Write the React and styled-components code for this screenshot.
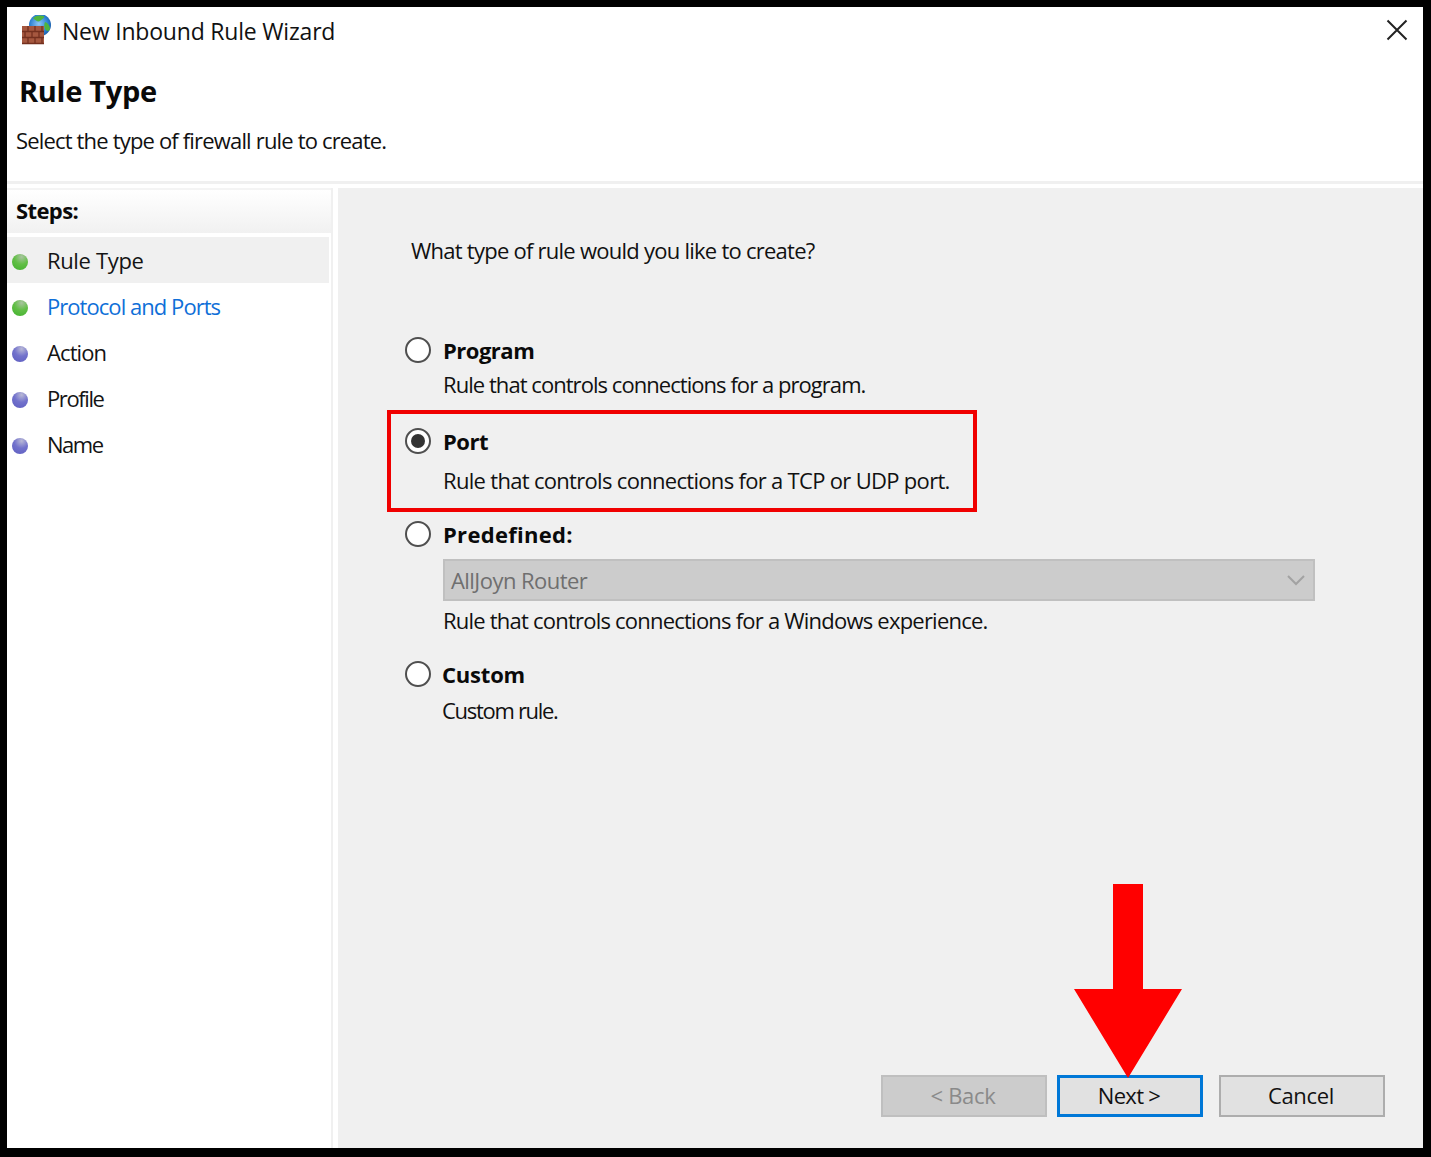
import React from "react";
import styled, { createGlobalStyle } from "styled-components";

const Global = createGlobalStyle`
  html, body { margin: 0; padding: 0; background: #000; }
  body { font-family: "Open Sans", "Noto Sans", "Liberation Sans", sans-serif; color: #111; }
  * { box-sizing: border-box; }
`;

const Frame = styled.div`
  position: relative;
  width: 1431px;
  height: 1157px;
  background: #000;
  padding: 7px 8px 9px 7px;
`;
const Dialog = styled.div`
  width: 100%;
  height: 100%;
  background: #fff;
  display: flex;
  flex-direction: column;
`;
const Header = styled.header`
  height: 177px;
  flex: none;
  border-bottom: 3px solid #f0f0f0;
  padding: 9px 15px 0 9px;
  display: flex;
  flex-direction: column;
`;
const TitleBar = styled.div`
  display: flex;
  align-items: center;
  height: 30px;
  padding-left: 4px;
`;
const AppIcon = styled.svg`
  width: 32px;
  height: 32px;
  flex: none;
  margin-right: 10px;
`;
const WindowTitle = styled.div`
  font-size: 23px;
  line-height: 30px;
  letter-spacing: -0.2px;
  flex: 1;
`;
const CloseIcon = styled.svg`
  width: 22px;
  height: 22px;
  flex: none;
  margin-bottom: 2px;
  color: #222;
`;
const Heading = styled.h1`
  margin: 27px 0 0 3px;
  font-size: 29px;
  line-height: 36px;
  font-weight: 700;
  letter-spacing: -0.3px;
  color: #0a0a0a;
`;
const Subheading = styled.p`
  margin: 16px 0 0 0;
  font-size: 22px;
  line-height: 30px;
  letter-spacing: -0.83px;
`;
const Body = styled.div`
  flex: 1;
  display: flex;
  min-height: 0;
  padding-top: 4px;
`;
const Sidebar = styled.aside`
  width: 326px;
  flex: none;
  border-right: 2px solid #f0f0f0;
  display: flex;
  flex-direction: column;
`;
const StepsTitle = styled.div`
  height: 45px;
  border-top: 2px solid #f4f4f4;
  background: linear-gradient(#ffffff, #f1f1f1);
  padding-left: 9px;
  font-size: 22px;
  line-height: 40px;
  font-weight: 700;
  letter-spacing: -0.6px;
  color: #0a0a0a;
`;
const StepList = styled.div`
  margin-top: 4px;
  display: flex;
  flex-direction: column;
  padding-right: 2px;
`;
const Step = styled.div`
  height: 46px;
  display: flex;
  align-items: center;
  padding-left: 5px;
  background: ${(p) => (p.$current ? "#f0f0f0" : "transparent")};
  color: ${(p) => (p.$link ? "#0f6fd8" : "#141414")};
  font-size: 22px;
  letter-spacing: ${(p) => p.$spacing}px;
`;
const Bullet = styled.span`
  width: 16px;
  height: 16px;
  border-radius: 50%;
  margin: 4px 19px 0 0;
  flex: none;
  background: ${(p) =>
    p.$done
      ? "radial-gradient(circle at 60% 18%, #a9c4a0 0, #62bf46 45%, #3fb02c 100%)"
      : "radial-gradient(circle at 60% 18%, #b9b9d6 0, #7272cc 45%, #5c5cc0 100%)"};
`;
const Panel = styled.main`
  flex: 1;
  margin-left: 5px;
  background: #f0f0f0;
  padding: 47px 38px 31px 49px;
  display: flex;
  flex-direction: column;
`;
const Question = styled.div`
  margin-left: 24px;
  font-size: 22px;
  line-height: 30px;
  letter-spacing: -0.75px;
  margin-bottom: 70px;
`;
const Option = styled.div`
  width: ${(p) => (p.$wide ? 928 : 590)}px;
  border-style: solid;
  border-color: ${(p) => (p.$marked ? "#f00000" : "transparent")};
  border-width: ${(p) => (p.$marked ? "4px" : "0 4px")};
  padding: ${(p) => (p.$marked ? "12px 14px 13px" : "0 14px")};
  margin-bottom: ${(p) => p.$after || 0}px;
`;
const OptionRow = styled.label`
  display: flex;
  align-items: center;
  height: 30px;
`;
const Radio = styled.span`
  width: 26px;
  height: 26px;
  border-radius: 50%;
  border: 2px solid #4f4f4f;
  background: #fff;
  margin-right: ${(p) => p.$gap || 12}px;
  flex: none;
  display: flex;
  align-items: center;
  justify-content: center;
  &::after {
    content: "";
    width: 14px;
    height: 14px;
    border-radius: 50%;
    background: ${(p) => (p.$checked ? "#333" : "transparent")};
  }
`;
const OptionTitle = styled.span`
  font-size: 22px;
  font-weight: 700;
  letter-spacing: ${(p) => p.$spacing ?? -0.5}px;
  color: #0a0a0a;
`;
const OptionText = styled.div`
  margin-left: ${(p) => p.$indent || 38}px;
  margin-top: ${(p) => p.$top || 4}px;
  font-size: 22px;
  line-height: 30px;
  letter-spacing: ${(p) => p.$spacing}px;
`;
const Combo = styled.div`
  margin: 10px 0 0 38px;
  width: 872px;
  height: 42px;
  background: #cccccc;
  border: 2px solid #c0c0c0;
  display: flex;
  align-items: center;
  justify-content: space-between;
  padding: 0 7px 0 6px;
  color: #6f6f6f;
  font-size: 22px;
  letter-spacing: -0.55px;
`;
const Chevron = styled.svg`
  width: 20px;
  height: 12px;
  color: #a2a2a2;
`;
const Footer = styled.footer`
  margin-top: auto;
  display: flex;
  justify-content: flex-end;
  gap: 10px;
`;
const Button = styled.button`
  width: ${(p) => (p.$primary ? 146 : 166)}px;
  height: 42px;
  margin-left: ${(p) => (p.$spaced ? 6 : 0)}px;
  font-family: inherit;
  font-size: 22px;
  letter-spacing: ${(p) => (p.$primary ? -0.7 : -0.3)}px;
  padding: 0 2px 2px 0;
  color: ${(p) => (p.disabled ? "#8a8a8a" : "#111")};
  background: ${(p) => (p.disabled ? "#cccccc" : "#e1e1e1")};
  border: ${(p) =>
    p.$primary ? "3px solid #0078d7" : p.disabled ? "2px solid #bfbfbf" : "2px solid #adadad"};
`;
const Arrow = styled.svg`
  position: absolute;
  left: 1074px;
  top: 884px;
  width: 108px;
  height: 194px;
`;

const steps = [
  { label: "Rule Type", done: true, current: true, spacing: -0.35 },
  { label: "Protocol and Ports", done: true, link: true, spacing: -0.95 },
  { label: "Action", spacing: -0.9 },
  { label: "Profile", spacing: -1.4 },
  { label: "Name", spacing: -1.5 },
];

export default function App() {
  return (
    <Frame>
      <Global />
      <Dialog>
        <Header>
          <TitleBar>
            <AppIcon viewBox="0 0 32 32">
              <defs>
                <radialGradient id="globe" cx="0.45" cy="0.45" r="0.6">
                  <stop offset="0" stopColor="#8fc8f5" />
                  <stop offset="0.7" stopColor="#2a7fd0" />
                  <stop offset="1" stopColor="#1b5aa5" />
                </radialGradient>
              </defs>
              <circle cx="20" cy="10" r="11" fill="url(#globe)" />
              <path d="M13 3c3-3 8-3 11-2 1 2-2 3-4 5-2 1-4 0-7-3zM25 7c3 1 5 4 5 7-1 3-4 2-5 0-1-2-1-5 0-7z" fill="#4fb43c" />
              <rect x="2" y="11" width="22" height="18" fill="#a5573f" />
              <path d="M2 16.5h22M2 22.5h22M2 28.5h22" stroke="#74301f" strokeWidth="1.3" />
              <path d="M8 11v5M15 11v5M22 11v5M5 17v5M12 17v5M19 17v5M8 23v6M15 23v6M22 23v6" stroke="#74301f" strokeWidth="1.3" />
            </AppIcon>
            <WindowTitle>New Inbound Rule Wizard</WindowTitle>
            <CloseIcon viewBox="0 0 22 22">
              <path d="M1.5 1.5l19 19M20.5 1.5l-19 19" stroke="currentColor" strokeWidth="2" fill="none" />
            </CloseIcon>
          </TitleBar>
          <Heading>Rule Type</Heading>
          <Subheading>Select the type of firewall rule to create.</Subheading>
        </Header>
        <Body>
          <Sidebar>
            <StepsTitle>Steps:</StepsTitle>
            <StepList>
              {steps.map((s) => (
                <Step key={s.label} $current={s.current} $link={s.link} $spacing={s.spacing}>
                  <Bullet $done={s.done} />
                  {s.label}
                </Step>
              ))}
            </StepList>
          </Sidebar>
          <Panel>
            <Question>What type of rule would you like to create?</Question>
            <Option $after={11}>
              <OptionRow>
                <Radio />
                <OptionTitle>Program</OptionTitle>
              </OptionRow>
              <OptionText $spacing={-0.95}>Rule that controls connections for a program.</OptionText>
            </Option>
            <Option $marked $after={7}>
              <OptionRow>
                <Radio $checked />
                <OptionTitle>Port</OptionTitle>
              </OptionRow>
              <OptionText $top={9} $spacing={-0.69}>Rule that controls connections for a TCP or UDP port.</OptionText>
            </Option>
            <Option $wide $after={24}>
              <OptionRow>
                <Radio />
                <OptionTitle $spacing={0.3}>Predefined:</OptionTitle>
              </OptionRow>
              <Combo>
                AllJoyn Router
                <Chevron viewBox="0 0 20 12">
                  <path d="M2 2l8 8 8-8" stroke="currentColor" strokeWidth="2" fill="none" />
                </Chevron>
              </Combo>
              <OptionText $top={4} $spacing={-0.78}>Rule that controls connections for a Windows experience.</OptionText>
            </Option>
            <Option>
              <OptionRow>
                <Radio $gap={11} />
                <OptionTitle $spacing={-0.2}>Custom</OptionTitle>
              </OptionRow>
              <OptionText $indent={37} $top={6} $spacing={-1.3}>Custom rule.</OptionText>
            </Option>
            <Footer>
              <Button disabled>&lt; Back</Button>
              <Button $primary>Next &gt;</Button>
              <Button $spaced>Cancel</Button>
            </Footer>
          </Panel>
        </Body>
      </Dialog>
      <Arrow viewBox="0 0 108 194">
        <path d="M39 0h30v105h39L54 194 0 105h39z" fill="#ff0000" />
      </Arrow>
    </Frame>
  );
}
